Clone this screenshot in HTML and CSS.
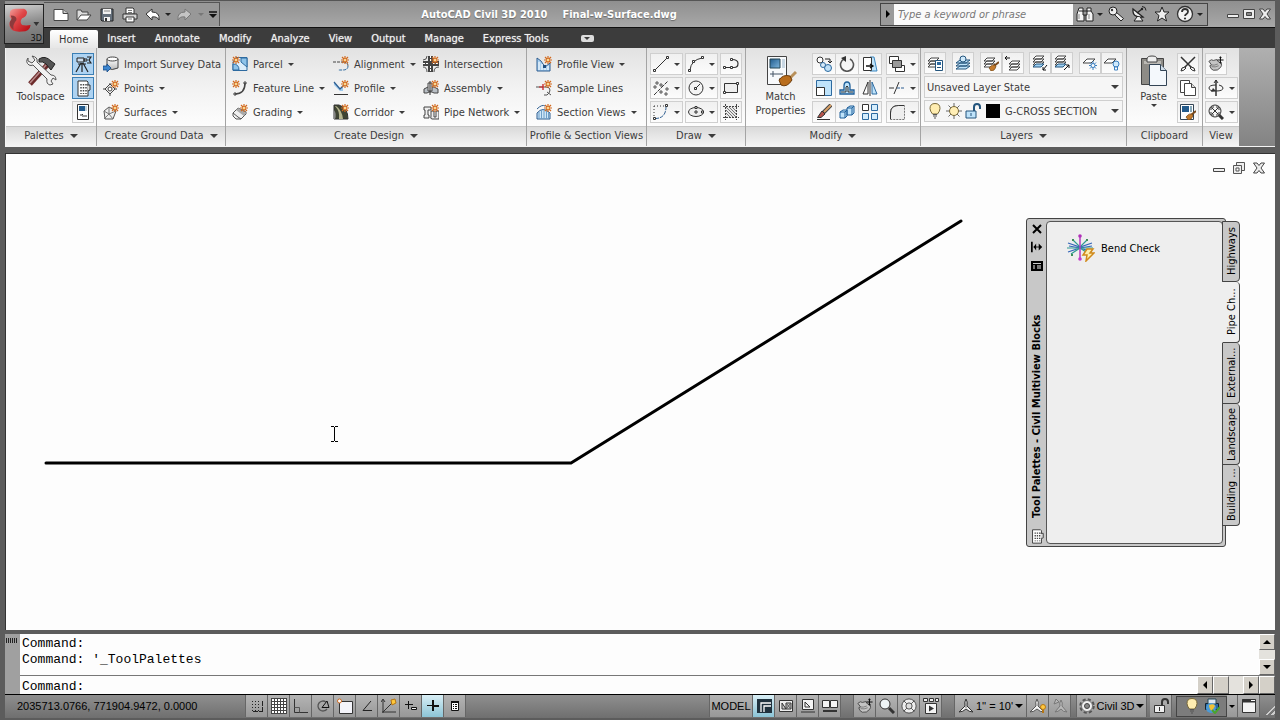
FILE: index.html
```html
<!DOCTYPE html>
<html lang="en">
<head>
    <meta charset="UTF-8">
    <meta name="viewport" content="width=device-width, initial-scale=1.0">
    <title>AutoCAD Civil 3D 2010 - Final-w-Surface.dwg</title>
    <link rel="stylesheet" href="styles.css">
</head>
<body>
    <!-- icon sprite -->
    <svg class="sprite" aria-hidden="true">
        <defs>
            <linearGradient id="red" x1="0" y1="0" x2="1" y2="1"><stop offset="0" stop-color="#f2a09c"/><stop offset=".4" stop-color="#e0494a"/><stop offset="1" stop-color="#b3060f"/></linearGradient>
            <linearGradient id="steel" x1="0" y1="0" x2="0" y2="1"><stop offset="0" stop-color="#fff"/><stop offset="1" stop-color="#b9b9b9"/></linearGradient>
            <linearGradient id="blue" x1="0" y1="0" x2="1" y2="1"><stop offset="0" stop-color="#1f5a8c"/><stop offset="1" stop-color="#7fb6de"/></linearGradient>
            <g id="spark"><path d="M12 0v8M8 4h8M9 1l6 6M15 1l-6 6" stroke="#d2691e" stroke-width="1.2"/><circle cx="12" cy="4" r="1.5" fill="#fff0b0" stroke="#d2691e" stroke-width=".6"/></g>
            <g id="brush"><path d="M16 7l-5 4" stroke="#7a4a1c" stroke-width="2"/><path d="M6 13q4-5 7-2q-1 5-5 5-1-2-2-3z" fill="#c47a2c" stroke="#70420f" stroke-width=".7"/></g>
            <g id="sheets" fill="#fff" stroke="#444"><path d="M1 12l3-3h8l-3 3zM1 9l3-3h8L9 9zM1 6l3-3h8L9 6z"/></g>
            <g id="bluesheets" fill="#bfe3fa" stroke="#24557d"><path d="M1 14l4-3h10l-4 3zM1 11l4-3h10l-4 3zM1 8l4-3h10l-4 3z"/></g>

            <symbol id="i-new" viewBox="0 0 16 16"><path d="M1 2.500h9l5 4v7H1z" fill="#fff" stroke="#444"/><path d="M10 2.500v4h5" fill="#ccc" stroke="#444"/></symbol>
            <symbol id="i-open" viewBox="0 0 16 16"><path d="M1 13V3h4l1 2h6v3" fill="#ddd" stroke="#444"/><path d="M1 13l4-5h10l-4 5z" fill="#fff" stroke="#444"/></symbol>
            <symbol id="i-save" viewBox="0 0 16 16"><path d="M2 2h12v12H3l-1-1z" fill="#65707c" stroke="#222"/><path d="M4 2h8v5H4zM5 10h6v4H5z" fill="#f2f2f2"/><path d="M5 4h6" stroke="#888"/><path d="M6 11h2v3H6z" fill="#333"/></symbol>
            <symbol id="i-print" viewBox="0 0 16 16"><path d="M4 1h7l1 1v5H4z" fill="#fff" stroke="#333"/><path d="M1 7h14v5H1z" fill="#d5d5d5" stroke="#333"/><path d="M4 10h8v5H4z" fill="#fff" stroke="#333"/><path d="M6 12h4M6 3.500h4M6 5.500h4" stroke="#777"/></symbol>
            <symbol id="i-undo" viewBox="0 0 16 16"><path d="M1 7l6-5v3q8 0 7 8-2-4-7-3v3z" fill="#fff" stroke="#333"/></symbol>
            <symbol id="i-redo" viewBox="0 0 16 16"><path d="M15 7L9 2v3q-8 0-7 8 2-4 7-3v3z" fill="#c4c4c4" stroke="#777"/></symbol>
            <symbol id="i-menu" viewBox="0 0 8 8"><path d="M0 1h8" stroke="#111" stroke-width="1.500"/><path d="M0 3h8L4 7z" fill="#111"/></symbol>

            <symbol id="i-find" viewBox="0 0 18 16"><path d="M3 2h4v3l1 2v8H1V8l1-3zM11 2h4v3l2 3v7h-7V7l1-2z" fill="#f4f4f4" stroke="#222"/><path d="M7 5h4v4H7z" fill="#999" stroke="#222"/><path d="M3 5h4M11 5h4" stroke="#222"/><path d="M3 8v5M13 8v5" stroke="#888"/></symbol>
            <symbol id="i-key" viewBox="0 0 16 16"><path d="M6 8l7 7 2.500-2.500L8 6" fill="#eee" stroke="#222"/><circle cx="5" cy="5" r="4" fill="#eee" stroke="#222"/><circle cx="4" cy="4" r="1.200" fill="#333"/></symbol>
            <symbol id="i-dish" viewBox="0 0 16 16"><path d="M2 3q-1 9 10 8z" fill="#eee" stroke="#222" stroke-width="1.300"/><path d="M6 7l5-4" stroke="#222" stroke-width="1.300"/><circle cx="11" cy="3" r="1.200" fill="#222"/><path d="M11 .5q4 0 4 4" fill="none" stroke="#222"/><path d="M6 11l-3 4h9l-3-4" fill="#eee" stroke="#222"/></symbol>
            <symbol id="i-star" viewBox="0 0 16 16"><path d="M8 1l2 5h5l-4 3.500 1.500 5.500L8 12l-4.500 3L5 9.500 1 6h5z" fill="#eee" stroke="#222"/></symbol>
            <symbol id="i-help" viewBox="0 0 18 18"><circle cx="9" cy="9" r="7.500" fill="#f4f4f4" stroke="#333" stroke-width="1.300"/><path d="M6 7q0-3 3-3t3 2.500q0 1.500-1.500 2.500T9 11" fill="none" stroke="#333" stroke-width="1.800"/><circle cx="9" cy="13.500" r="1.100" fill="#333"/></symbol>
            <symbol id="i-min" viewBox="0 0 12 12"><path d="M.5 6.500h11v3H.5z" fill="#eee" stroke="#444"/></symbol>
            <symbol id="i-max" viewBox="0 0 12 12"><path d="M.5 1.500h11v9H.5z" fill="#eee" stroke="#444"/><path d="M3.500 4.500h5v3h-5z" fill="#888" stroke="#444"/></symbol>
            <symbol id="i-restore" viewBox="0 0 12 12"><path d="M3.500.5h8v8h-8z" fill="#eee" stroke="#555"/><path d="M.5 3.500h8v8h-8z" fill="#eee" stroke="#555"/><path d="M3 6h3v3H3z" fill="#fff" stroke="#555"/></symbol>
            <symbol id="i-close" viewBox="0 0 12 12"><path d="M.5 1h3.500l2 2.500L8 1h3.500L8 6l3.500 5H8L6 8.500 4 11H.5L4 6z" fill="#eee" stroke="#444"/></symbol>

            <symbol id="i-toolspace" viewBox="0 0 32 32"><path d="M5 29L23 9" stroke="#6d2b2b" stroke-width="5"/><path d="M5 28L22 9" stroke="#b98b8b" stroke-width="1.500"/><path d="M14 4q6-4 12 2l4 3-4 6-5-6q-3-3-7-2z" fill="#555" stroke="#222"/><path d="M3 3q-3 4 1 7 2 1 4 0l14 14q-1 5 3 6l3-1-2-3 2-3 3 2q0-5-5-5L12 7q1-5-5-6l3 4-3 3-4-2z" fill="#f2f2f2" stroke="#555"/></symbol>
            <symbol id="i-survey" viewBox="0 0 18 18"><path d="M3 3h7v4H3zM10 4h3v2h-3z" fill="#cde" stroke="#222"/><path d="M13 2h4l-2 3 2 3h-4M8 8v9M7 8l-5 9M9 8l5 9M4 9h8" fill="none" stroke="#222" stroke-width="1.200"/></symbol>
            <symbol id="i-calc" viewBox="0 0 18 18"><path d="M4 2h9l1 1v14H4z" fill="#fff" stroke="#333"/><path d="M13 6h3v5l-2 1" fill="#ddd" stroke="#333"/><path d="M7 5v10M9.500 5v10M12 5v10" stroke="#444" stroke-width="1.500" stroke-dasharray="1.500 1.500"/></symbol>
            <symbol id="i-props" viewBox="0 0 18 18"><path d="M3.500 1.500h11v15h-11z" fill="#fff" stroke="#333"/><path d="M5 3h6v5H5z" fill="#245b8c"/><path d="M12 3v5" stroke="#8ab"/><path d="M6 12h2l1-1M8 13h5" fill="none" stroke="#333"/></symbol>

            <symbol id="i-import" viewBox="0 0 16 16"><path d="M4 3v9q5 3 11 0V3" fill="url(#steel)" stroke="#444"/><ellipse cx="9.500" cy="3" rx="5.500" ry="2" fill="#fff" stroke="#444"/><path d="M0 10h4V8l4 4-4 4v-2H0z" fill="#3d86cf" stroke="#154a86" stroke-width=".8"/></symbol>
            <symbol id="i-points" viewBox="0 0 16 16"><path d="M7 3v3M7 12v4M0 9h4M10 9h4" stroke="#444"/><path d="M7 4l2 2 3 3-5 5-5-5z" fill="#eee" stroke="#444"/><circle cx="7" cy="9" r="2" fill="#fff" stroke="#444"/><use href="#spark"/></symbol>
            <symbol id="i-surface" viewBox="0 0 16 16"><path d="M1 7l5-4 7 4-3 8H2z" fill="#eee" stroke="#555"/><path d="M6 3v7l-5 5M6 10l7-3M6 10l4 5M6 10L1 7" fill="none" stroke="#777"/><use href="#spark"/></symbol>
            <symbol id="i-parcel" viewBox="0 0 16 16"><path d="M4 1.500h11v13H1V6z" fill="#dcedfa" stroke="#2d6aa0"/><path d="M9 2v4l6 5V2zM1 8q6 0 6 6H1z" fill="#8fc4ea" stroke="#2d6aa0"/><use href="#spark" x="-8"/></symbol>
            <symbol id="i-feature" viewBox="0 0 16 16"><path d="M3 14q10 0 10-11" fill="none" stroke="#444" stroke-width="1.500"/><path d="M1 14h4M3 12v4M11 3h4M13 1v4" stroke="#444"/><use href="#spark" x="-8"/></symbol>
            <symbol id="i-grading" viewBox="0 0 16 16"><path d="M1 9l5-5 8 4v2l-5 5H4l-3-3z" fill="#f0f0f0" stroke="#555"/><path d="M4 6l8 6 2-3-8-5z" fill="#aaa"/><path d="M1 9l5 4 3 2" fill="none" stroke="#555"/><use href="#spark"/></symbol>
            <symbol id="i-align" viewBox="0 0 16 16"><path d="M0 6h3M4 6h6M10 6q5 0 5 4" fill="none" stroke="#444" stroke-dasharray="3 1"/><path d="M15 10q0 4-5 4H5" fill="none" stroke="#2d6aa0" stroke-dasharray="3 1"/><use href="#spark"/></symbol>
            <symbol id="i-profile" viewBox="0 0 16 16"><path d="M1 2l6 7 3-3v5H7L1 5z" fill="#9cc8ec"/><path d="M1 2l6 7 4-4" fill="none" stroke="#2d5d90" stroke-width="1.200"/><path d="M1 14.500h14" stroke="#333"/><use href="#spark"/></symbol>
            <symbol id="i-corridor" viewBox="0 0 16 16"><path d="M1 1h5q9 3 9 14H1z" fill="#3f4433" stroke="#333"/><path d="M2 2q5 5 4 13h4Q9 6 3 2z" fill="#b6b58e"/><path d="M1 6q3 4 1 9H1z" fill="#888"/><use href="#spark"/></symbol>
            <symbol id="i-intersect" viewBox="0 0 16 16"><path d="M5 0h5v5h6v5h-6v6H5v-6H0V5h5z" fill="#444"/><path d="M7.500 0v5M0 7.500h5M10 7.500h6M7.500 10v6" stroke="#fff" stroke-dasharray="2 1"/><path d="M0 4q4 0 4-4M0 11q4 0 4 5M11 16q0-5 5-5" fill="none" stroke="#555"/><use href="#spark"/></symbol>
            <symbol id="i-assembly" viewBox="0 0 16 16"><path d="M1 13V9l4-2h6l4 2v4h-4l-2-1H6l-2 1z" fill="#b9bfc5" stroke="#444"/><path d="M5 3h4v8H5z" fill="#e8e8e8" stroke="#444"/><path d="M7 1v14" stroke="#333"/><use href="#spark"/></symbol>
            <symbol id="i-pipe" viewBox="0 0 16 16"><path d="M1 3h7v3H5v5h1v3H1v-3h1V6H1zM8 7h3v6h2V7h3v8H9q-2 0-1-3z" fill="#eee" stroke="#444"/><use href="#spark"/></symbol>
            <symbol id="i-pview" viewBox="0 0 16 16"><path d="M1 2v13h13V7l-5 4-4-6z" fill="#a9d0f0" stroke="#2d5d90"/><path d="M3 6v8M6 8v6M9 12v2M12 10v4" stroke="#fff"/><path d="M7 9h3v3H7z" fill="#1f4f80"/><use href="#spark"/></symbol>
            <symbol id="i-sample" viewBox="0 0 16 16"><path d="M0 7h10q4 0 4 3t-3 5H8" fill="none" stroke="#555"/><path d="M7 4v6" stroke="#c22" stroke-width="1.300"/><path d="M3 7h4" stroke="#c22"/><path d="M11 12l4 3" stroke="#555"/><use href="#spark"/></symbol>
            <symbol id="i-section" viewBox="0 0 16 16"><path d="M1 15V9q6-7 13 0v6z" fill="#cfe6f8" stroke="#2d5d90"/><path d="M3 8v7M5.500 6v9M8 6v9M10.500 6v9M12.500 8v7" stroke="#6f9fc8"/><path d="M1 5q5-5 8-3" fill="none" stroke="#2d5d90"/><use href="#spark"/></symbol>

            <symbol id="i-line" viewBox="0 0 16 16"><path d="M2 14L14 2" stroke="#333"/><path d="M.5 13.500h2v2h-2zM13.500.5h2v2h-2z" fill="#fff" stroke="#333"/></symbol>
            <symbol id="i-arc" viewBox="0 0 16 16"><path d="M2 14Q3 4 14 2" fill="none" stroke="#333"/><path d="M.5 13.500h2v2h-2zM13.500.5h2v2h-2zM4.500 4.500h2v2h-2z" fill="#fff" stroke="#333"/></symbol>
            <symbol id="i-pline" viewBox="0 0 16 16"><path d="M2 11.500h9q4 0 4-4t-6-4" fill="none" stroke="#333" stroke-width="1.200"/><path d="M.5 10.500h2v2h-2zM7.500 10.500h2v2h-2zM7.500 2.500h2v2h-2z" fill="#fff" stroke="#333"/></symbol>
            <symbol id="i-divide" viewBox="0 0 16 16"><path d="M1 15L15 1" stroke="#333" stroke-dasharray="4 1"/><path d="M3 2h2v2H3zM1 6h2v2H1zM7 4h2v2H7zM7 11h2v2H7zM13 8h2v2h-2zM12 13h2v2h-2z" fill="#fff" stroke="#333" stroke-width=".8"/></symbol>
            <symbol id="i-circle" viewBox="0 0 16 16"><circle cx="8" cy="8" r="7" fill="#f4f4f4" stroke="#333"/><path d="M8 8l4-4" stroke="#333"/><path d="M6.500 7.500h2v2h-2z" fill="#fff" stroke="#333"/></symbol>
            <symbol id="i-rect" viewBox="0 0 16 16"><path d="M1.500 3.500h13v9h-13z" fill="#eee" stroke="#333"/><path d="M.5 11.500h2v2h-2zM13.500 2.500h2v2h-2z" fill="#fff" stroke="#333"/></symbol>
            <symbol id="i-curve" viewBox="0 0 16 16"><path d="M2 14.500q11 0 11-12" fill="none" stroke="#2d5d90" stroke-dasharray="4 1"/><path d="M1 2v12M1 2h12" stroke="#333" stroke-dasharray="1 2"/><path d="M.5 13.500h2v2h-2zM12.500.5h2v2h-2z" fill="#fff" stroke="#333"/></symbol>
            <symbol id="i-ellipse" viewBox="0 0 16 16"><ellipse cx="8" cy="8" rx="7.500" ry="4.500" fill="#eee" stroke="#333"/><path d="M7 7h2v2H7zM7 2.500h2v2H7zM13.500 7h2v2h-2z" fill="#fff" stroke="#333"/></symbol>
            <symbol id="i-hatch" viewBox="0 0 16 16"><path d="M2.500 2.500h11v11h-11z" fill="#e8e8e8"/><path d="M3 3l10 10M6 3l7 7M3 6l7 7M9 3l4 4M3 9l4 4" stroke="#777"/><path d="M2.500 0v16M13.500 0v16M0 2.500h16M0 13.500h16" stroke="#444" stroke-dasharray="2 1"/></symbol>

            <symbol id="i-match" viewBox="0 0 32 32"><path d="M2.500 1.500h19v28h-19z" fill="#f8fafc" stroke="#444"/><path d="M5 4h10v9H5z" fill="url(#blue)" stroke="#245"/><path d="M17 4h3v9h-3z" fill="#c9d8e4"/><path d="M5 19h13M8 16v6M14 24h4" stroke="#456"/><path d="M31 17l-7 7" stroke="#b8905a" stroke-width="3"/><path d="M14 25q4-6 11-4l2 4q-5 8-11 5z" fill="#b96d1c" stroke="#6c3b0a"/></symbol>
            <symbol id="i-copyobj" viewBox="0 0 16 16"><circle cx="4" cy="4" r="3" fill="#fff" stroke="#333"/><circle cx="12" cy="12" r="3.500" fill="#bfe0f7" stroke="#2d6aa0"/><path d="M9 3h5v4M12 5l2 2 2-2" fill="none" stroke="#222"/><circle cx="7" cy="9" r="2.500" fill="#d9ecfa" stroke="#2d6aa0"/></symbol>
            <symbol id="i-rotate" viewBox="0 0 16 16"><path d="M5 3a6.500 6.500 0 1 0 6 0" fill="none" stroke="#555" stroke-width="1.600"/><path d="M7 0v6L2 2z" fill="#333"/></symbol>
            <symbol id="i-stretch" viewBox="0 0 16 16"><path d="M8 1h4l3 14H8z" fill="#bfe3fa" stroke="#3b86bf"/><path d="M1.500 1.500h8v13h-8z" fill="#fff" stroke="#333"/><path d="M4 10h6M8 8l3 2-3 2" stroke="#111" fill="none" stroke-width="1.300"/></symbol>
            <symbol id="i-scale" viewBox="0 0 16 16"><path d="M.5.5h15v15H.5z" fill="#bfe3fa" stroke="#2d6aa0"/><path d="M.5 7.500h8v8h-8z" fill="#fff" stroke="#333"/></symbol>
            <symbol id="i-offset" viewBox="0 0 16 16"><path d="M1 14v-4h4V6q0-4 3-4t3 4v4h4v4z" fill="#bfe3fa" stroke="#1f5f99" stroke-width="1.300"/><path d="M2 12h5V7q1-2 2 0v5h5" fill="none" stroke="#333"/></symbol>
            <symbol id="i-mirror" viewBox="0 0 16 16"><path d="M6 2v12H1z" fill="#fff" stroke="#333"/><path d="M10 2v12h5z" fill="#bfe3fa" stroke="#2d6aa0"/><path d="M8 0v16" stroke="#333"/></symbol>
            <symbol id="i-erase" viewBox="0 0 16 16"><path d="M15 1L7 9" stroke="#444" stroke-width="4"/><path d="M15 1L8 8" stroke="#d9a066" stroke-width="2"/><path d="M6 7l3 3-4 3.500H1.500z" fill="#b5534a" stroke="#333"/><path d="M1 15.500h13" stroke="#333"/></symbol>
            <symbol id="i-explode" viewBox="0 0 16 16"><path d="M1 8l3-2h4v6l-2 2H1zM8 4l3-2h4v7l-2 2H8z" fill="#bfe3fa" stroke="#1f5f99"/><path d="M1 8h5v6M6 8l2-2M8 4h5v7M13 4l2-2" fill="none" stroke="#1f5f99"/></symbol>
            <symbol id="i-array" viewBox="0 0 16 16"><path d="M.5.5h6v6h-6z" fill="#fff" stroke="#333"/><path d="M9.500.5h6v6h-6zM.5 9.500h6v6h-6zM9.500 9.500h6v6h-6z" fill="#d5edfc" stroke="#2d6aa0"/></symbol>
            <symbol id="i-order" viewBox="0 0 16 16"><path d="M.5.5h9v7h-9zM6.500 9.500h9v6h-9z" fill="#fff" stroke="#333"/><path d="M3.500 4.500h9v7h-9z" fill="#999" stroke="#333"/></symbol>
            <symbol id="i-trim" viewBox="0 0 16 16"><path d="M0 8h5M10 2L5 14" stroke="#333"/><path d="M8 8h8" stroke="#2d5d90" stroke-dasharray="3 1"/></symbol>
            <symbol id="i-fillet" viewBox="0 0 16 16"><path d="M1.500 15.500V9q0-7.500 8-7.500h6v14z" fill="#eee" stroke="#777" stroke-dasharray="2 1"/><path d="M1.500 15V9q0-7.500 8-7.500H15" fill="none" stroke="#333"/></symbol>

            <symbol id="i-lprops" viewBox="0 0 16 16"><use href="#sheets"/><path d="M8.500 5.500h7v10h-7z" fill="#fff" stroke="#24557d"/><path d="M10 7h4v3h-4z" fill="#2d6aa0"/><path d="M10 12.500h4" stroke="#24557d"/></symbol>
            <symbol id="i-lcurrent" viewBox="0 0 16 16"><use href="#bluesheets"/><circle cx="8" cy="4" r="3" fill="#cfe9fb" stroke="#24557d"/></symbol>
            <symbol id="i-lmatch" viewBox="0 0 16 16"><use href="#sheets"/><use href="#brush"/></symbol>
            <symbol id="i-lprev" viewBox="0 0 16 16"><use href="#sheets" x="3" y="3"/><path d="M0 3h5M2 1L0 3l2 2" stroke="#111" fill="none"/></symbol>
            <symbol id="i-liso" viewBox="0 0 16 16"><use href="#sheets" y="-2"/><path d="M1 12l3-3h8l-3 3z" fill="#9fd2f5" stroke="#24557d"/><path d="M15 10l-4 5M11 12v3h3" fill="none" stroke="#111"/></symbol>
            <symbol id="i-luniso" viewBox="0 0 16 16"><use href="#sheets" y="-2"/><path d="M1 12l3-3h8l-3 3z" fill="#9fd2f5" stroke="#24557d"/><path d="M10 15l5-5M12 10h3v3" fill="none" stroke="#111"/></symbol>
            <symbol id="i-lfreeze" viewBox="0 0 16 16"><path d="M1 8l4-4h8L9 8z" fill="#fff" stroke="#444"/><path d="M11 6v9M7 10.500h8M8 7.500l6 6M14 7.500l-6 6" stroke="#3b7fc0"/><circle cx="11" cy="10.500" r="2" fill="#fff" stroke="#3b7fc0"/></symbol>
            <symbol id="i-loff" viewBox="0 0 16 16"><path d="M0 8l4-4h8L8 8z" fill="#fff" stroke="#444"/><circle cx="12" cy="9" r="3" fill="#cfe9fb" stroke="#3b7fc0"/><path d="M10.500 12h3v3h-3z" fill="#fff" stroke="#3b7fc0"/></symbol>
            <symbol id="i-bulb" viewBox="0 0 16 16"><path d="M5.500 11Q3 8 3 5.500q0-5 5-5t5 5Q13 8 10.500 11z" fill="#ffedb0" stroke="#7a6a3a"/><path d="M6 11.500h4M6 13h4M7 15h2" stroke="#555"/></symbol>
            <symbol id="i-sun" viewBox="0 0 16 16"><path d="M8 0v16M0 8h16M2.500 2.500l11 11M13.500 2.500l-11 11" stroke="#666"/><circle cx="8" cy="8" r="4.500" fill="#ffeeb5" stroke="#7a6a3a"/></symbol>
            <symbol id="i-unlock" viewBox="0 0 16 16"><path d="M9 8V4q0-3 3-3t3 3v2" fill="none" stroke="#24557d" stroke-width="2"/><path d="M1 8h10v7H1z" fill="#bfe3fa" stroke="#24557d"/><path d="M6 10v3" stroke="#24557d"/></symbol>

            <symbol id="i-paste" viewBox="0 0 28 32"><path d="M1.500 3.500h22v26h-22z" fill="#8d8b86" stroke="#444"/><path d="M4 6h17v3H4z" fill="#bbb9b4"/><path d="M7 4q0-3 5-3t5 3v3H7z" fill="#eee" stroke="#444"/><path d="M9.500 9.500h11l6 6v15h-17z" fill="#f4f8fc" stroke="#345"/><path d="M20.500 9.500v6h6" fill="#cfdce8" stroke="#345"/></symbol>
            <symbol id="i-cut" viewBox="0 0 16 16"><path d="M1 1l11 11M15 1L4 12" stroke="#333" stroke-width="1.500"/><path d="M1 15q0-4 4-4l1 1q-2 3-5 3zM15 15q0-4-4-4l-1 1q2 3 5 3z" fill="#eee" stroke="#333"/></symbol>
            <symbol id="i-copy" viewBox="0 0 16 16"><path d="M.5.5h9v12h-9z" fill="#fff" stroke="#444"/><path d="M4.500 3.500h7l4 4v8h-11z" fill="#fff" stroke="#444"/><path d="M11.500 3.500v4h4" fill="#ddd" stroke="#444"/></symbol>
            <symbol id="i-mprop" viewBox="0 0 16 16"><path d="M.5.5h13v15H.5z" fill="#fff" stroke="#345"/><path d="M2 2h7v6H2z" fill="#245b8c"/><path d="M11 2v6" stroke="#8ab" stroke-width="2"/><use href="#brush"/></symbol>
            <symbol id="i-pan" viewBox="0 0 18 16"><path d="M1 5q3-3 5-1l4-1 1 2 4 2q1 3-1 5-3 4-8 3-3-1-4-5l2-1z" fill="#c4c4c4" stroke="#444"/><path d="M3 9q4 1 8-1M4 11q4 1 8-1" fill="none" stroke="#777"/><path d="M14 0v7M10.500 3.500h7M13 1l1-1 1 1M13 6l1 1 1-1" fill="none" stroke="#111" stroke-width="1.200"/></symbol>
            <symbol id="i-orbit" viewBox="0 0 16 16"><path d="M8 0v16" stroke="#333" stroke-width="1.500"/><path d="M6 3l2-3 2 3" fill="none" stroke="#333"/><path d="M11 5q4 1 4 3 0 3-7 3t-7-3q0-3 7-3" fill="none" stroke="#333"/><path d="M5 8l-2 4 5-1z" fill="#333"/></symbol>
            <symbol id="i-zoomext" viewBox="0 0 16 16"><path d="M11 11l4 4" stroke="#333" stroke-width="3"/><circle cx="7" cy="7" r="6" fill="#f4f4f4" stroke="#333"/><path d="M4 4l6 6M10 4l-6 6" stroke="#333"/><path d="M3 6V3h3M8 3h3v3M3 8v3h3M11 8v3H8" fill="none" stroke="#333"/></symbol>

            <symbol id="i-bend" viewBox="0 0 28 28"><path d="M1 9l12 4 12-4M1 18l12-4 12 4M2 12l11 2 12-2" fill="none" stroke="#3566b8" stroke-width="1.200"/><path d="M0 14h26M4 20l9-6 9 6M6 6l7 7 7-7" fill="none" stroke="#2e9a91" stroke-width="1.200"/><path d="M5 5h2v2H5zM19 5h2v2h-2zM4 20h2v2H4z" fill="#3c8f5a"/><path d="M13 2v23" stroke="#b43bc0" stroke-width="1.500"/><circle cx="13" cy="2" r="1.800" fill="#b030b8"/><circle cx="13" cy="25" r="1.800" fill="#c53acb"/><path d="M20 15h6l-3 4h4l-8 8 1-6h-4z" fill="#fdf0b0" stroke="#d18a1c" stroke-width="1.500"/></symbol>
            <symbol id="i-autohide" viewBox="0 0 14 12"><path d="M1 0v12" stroke="#000" stroke-width="2"/><path d="M6 2L3 6l3 4zM9 2l4 4-4 4z"/><path d="M3 6h9" stroke="#000"/></symbol>
            <symbol id="i-palmenu" viewBox="0 0 12 12"><path d="M0 1h12v10H0z"/><path d="M2 3.500h8" stroke="#ccc"/><path d="M6 6h4M6 8h4M2 6h2M2 8h2" stroke="#eee"/></symbol>
            <symbol id="i-x" viewBox="0 0 10 10"><path d="M1 1l8 8M9 1L1 9" stroke="#000" stroke-width="2"/></symbol>

            <symbol id="i-snap" viewBox="0 0 16 16"><path d="M3.500 3v10M6.500 3v10M9.500 3v10" stroke="#222" stroke-dasharray="1 2"/><path d="M13.500 3v11M4 13.500h10" stroke="#222" stroke-dasharray="5 1"/></symbol>
            <symbol id="i-grid" viewBox="0 0 16 16"><path d="M.5.5h15v15H.5z" fill="#fff"/><path d="M.5 0v16M3.500 0v16M6.500 0v16M9.500 0v16M12.500 0v16M15.500 0v16M0 .5h16M0 3.500h16M0 6.500h16M0 9.500h16M0 12.500h16M0 15.500h16" stroke="#444"/></symbol>
            <symbol id="i-ortho" viewBox="0 0 16 16"><path d="M1.500 1v13.500H15" fill="none" stroke="#333"/><path d="M1.500 9.500h5v5" fill="none" stroke="#555"/></symbol>
            <symbol id="i-polar" viewBox="0 0 16 16"><path d="M11 4a5 5 0 1 0 1 7" fill="none" stroke="#555" stroke-width="1.300"/><path d="M7 9.500h7L12 3 7 9.500" fill="none" stroke="#111"/></symbol>
            <symbol id="i-osnap" viewBox="0 0 16 16"><path d="M2.500 3.500h13v12h-13z" fill="#f4f4fa" stroke="#333"/><circle cx="2.500" cy="3" r="2" fill="#fff" stroke="#cf6a20"/></symbol>
            <symbol id="i-otrack" viewBox="0 0 16 16"><path d="M12 3L4 12.500h9" fill="none" stroke="#222"/></symbol>
            <symbol id="i-ducs" viewBox="0 0 16 16"><path d="M2 15V2M0 4l2-3 2 3M1 14h14M2 14l9-9" fill="none" stroke="#333"/><path d="M10 2l4-1 1 4-4 2z" fill="#ffc93c" stroke="#b57614"/></symbol>
            <symbol id="i-dyn" viewBox="0 0 16 16"><path d="M2 6.500h8M5.500 3v8" stroke="#111"/><path d="M8.500 9.500h5v2h-5z" fill="#eee" stroke="#111"/></symbol>
            <symbol id="i-lwt" viewBox="0 0 16 16"><path d="M2 7.500h6" stroke="#111"/><path d="M8 8h6M8 2v11" stroke="#111" stroke-width="2"/></symbol>
            <symbol id="i-qp" viewBox="0 0 16 16"><path d="M4.500 3.500h7v9h-7z" fill="#fff" stroke="#111"/><path d="M4 4h8" stroke="#111" stroke-width="2"/><path d="M6 6.500h4M6 8.500h4M6 10.500h4" stroke="#111" stroke-dasharray="1 1 3"/></symbol>
            <symbol id="i-model" viewBox="0 0 16 16"><path d="M1 1h15v14H1z" fill="#20323e"/><path d="M5 14V5h10M8 14V8h7" fill="none" stroke="#fff" stroke-width="1.300"/></symbol>
            <symbol id="i-layout" viewBox="0 0 16 16"><path d="M1.500 2.500h13v11h-13z" fill="#eee" stroke="#333"/><path d="M4 5v6h4zM8 5h5v6H8z" fill="#ccc" stroke="#333"/><path d="M8 5l5 6M13 5l-5 6" stroke="#555"/></symbol>
            <symbol id="i-qvl" viewBox="0 0 16 16"><path d="M2.500 1.500h11v10h-11z" fill="#f4f4f4" stroke="#333"/><path d="M5 4v5h5z" fill="none" stroke="#333"/><path d="M1 14h14" stroke="#333"/></symbol>
            <symbol id="i-qvd" viewBox="0 0 16 16"><path d="M.5 2.500h7v7h-7zM8.500 2.500h7v7h-7z" fill="#f4f4f4" stroke="#333"/><path d="M1 13h14" stroke="#333" stroke-width="2"/></symbol>
            <symbol id="i-zoom" viewBox="0 0 16 16"><path d="M10 10l5 5" stroke="#333" stroke-width="3"/><circle cx="6" cy="6" r="5" fill="#eef4f6" stroke="#333"/></symbol>
            <symbol id="i-wheel" viewBox="0 0 18 18"><circle cx="9" cy="9" r="8" fill="#eee" stroke="#444"/><circle cx="9" cy="9" r="3.500" fill="#ddd" stroke="#444"/><path d="M3 3l3.500 3.500M15 3l-3.500 3.500M3 15l3.500-3.500M15 15l-3.500-3.500" stroke="#444"/></symbol>
            <symbol id="i-motion" viewBox="0 0 16 16"><path d="M.5.500h4v3h-4zM6.500.500h4v3h-4zM12.500.500h3v3h-3z" fill="#eee" stroke="#333"/><path d="M2.500 5.500h11v10h-11z" fill="#f4f4f4" stroke="#333"/><path d="M6 7.500l5 3-5 3z" fill="#333"/></symbol>
            <symbol id="i-anno" viewBox="0 0 16 16"><path d="M8 1q2 3 1 7l6 6q-4 0-7-3-3 3-7 3l6-6Q6 4 8 1z" fill="#f4f4f4" stroke="#333"/><path d="M8 3v7" stroke="#777"/></symbol>
            <symbol id="i-annovis" viewBox="0 0 16 16"><path d="M7 1q2 3 1 7l6 6q-4 0-7-3-3 3-7 3l6-6Q5 4 7 1z" fill="#f4f4f4" stroke="#555"/><circle cx="13" cy="9" r="2.500" fill="#ffc840" stroke="#b57614"/><path d="M13 12v3" stroke="#b57614" stroke-width="2"/></symbol>
            <symbol id="i-annoauto" viewBox="0 0 16 16"><path d="M9 2q2 3 1 6l5 6q-4 0-6-3-3 3-6 3l5-6q-1-3 1-6zM4 1L2 6l5-2z" fill="#b9b9b9" stroke="#777"/></symbol>
            <symbol id="i-gear" viewBox="0 0 16 16"><circle cx="8" cy="8" r="6.500" fill="none" stroke="#555" stroke-width="2.500" stroke-dasharray="3 2.100"/><circle cx="8" cy="8" r="5.500" fill="#f0f0f0" stroke="#777"/><circle cx="8" cy="8" r="2.500" fill="#888" stroke="#444"/></symbol>
            <symbol id="i-lock" viewBox="0 0 16 16"><path d="M9 7V4q0-3 3-3t3 3v2" fill="none" stroke="#333" stroke-width="2"/><path d="M1.500 7.500h10v7h-10z" fill="#eee" stroke="#333"/><path d="M6.500 9v4" stroke="#333"/></symbol>
            <symbol id="i-globe" viewBox="0 0 16 16"><path d="M1.500 5.500h13v6h-13z" fill="#2d6aa0" stroke="#123"/><path d="M4 1h8v5H4z" fill="#dfe9f2" stroke="#245"/><circle cx="7" cy="10" r="5" fill="#4b9ad6"/><path d="M5 7q5-2 6 1l-3 5q-3-2-3-6z" fill="#f1c232"/><path d="M8 12l3 3 5-6" fill="none" stroke="#4aa52e" stroke-width="2"/></symbol>
            <symbol id="i-clean" viewBox="0 0 16 16"><path d="M1.500 1.500h13v13h-13z" fill="#f4f4f4" stroke="#333"/><path d="M1 3h14" stroke="#333" stroke-width="3"/><path d="M10 2.500h4" stroke="#fff"/></symbol>
        </defs>
    </svg>

    <div class="app">
        <header class="titlebar">
            <div class="qat">
                <button aria-label="New"><svg><use href="#i-new"/></svg></button>
                <button aria-label="Open"><svg><use href="#i-open"/></svg></button>
                <button aria-label="Save"><svg><use href="#i-save"/></svg></button>
                <button aria-label="Plot"><svg><use href="#i-print"/></svg></button>
                <button aria-label="Undo"><svg><use href="#i-undo"/></svg></button>
                <button class="drop" aria-label="Undo list"><i class="tri"></i></button>
                <button aria-label="Redo"><svg><use href="#i-redo"/></svg></button>
                <button class="drop dim" aria-label="Redo list"><i class="tri"></i></button>
                <button class="drop" aria-label="Customize"><svg class="s8"><use href="#i-menu"/></svg></button>
            </div>
            <h1 class="title"><span>AutoCAD Civil 3D 2010</span><span>Final-w-Surface.dwg</span></h1>
            <div class="infocenter">
                <button class="expand" aria-label="Collapse search"><i class="tri right"></i></button>
                <input type="text" placeholder="Type a keyword or phrase" aria-label="Search">
                <button aria-label="Search"><svg class="s18"><use href="#i-find"/></svg></button>
                <button class="drop" aria-label="Search options"><i class="tri"></i></button>
                <button aria-label="Subscription"><svg><use href="#i-key"/></svg></button>
                <button aria-label="Communication"><svg><use href="#i-dish"/></svg></button>
                <button aria-label="Favorites"><svg><use href="#i-star"/></svg></button>
                <button aria-label="Help"><svg class="s18"><use href="#i-help"/></svg></button>
                <button class="drop" aria-label="Help options"><i class="tri"></i></button>
            </div>
            <div class="winbtns">
                <button aria-label="Minimize"><svg class="s12"><use href="#i-min"/></svg></button>
                <button aria-label="Maximize"><svg class="s12"><use href="#i-max"/></svg></button>
                <button aria-label="Close"><svg class="s12"><use href="#i-close"/></svg></button>
            </div>
        </header>
        <button class="appmenu" aria-label="Application menu">
            <svg viewBox="0 0 40 40"><path d="M5 11Q4 4 11 4l9 0q4 2 3 5-1 4-5 5-3 4 0 7 4 1 9 0-1 7-9 7-11 1-13-5-1-5 2-8-3-3-2-4z" fill="url(#red)"/><path d="M6 11q7 0 6 5-4 4-3 10-5-3-4-8 2-3 2-4z" fill="#8d3a3c"/><path d="M30 18h6l-3 4z" fill="#333"/></svg>
            <span>3D</span>
        </button>

        <nav class="tabs">
            <button class="tab active">Home</button>
            <button class="tab">Insert</button>
            <button class="tab">Annotate</button>
            <button class="tab">Modify</button>
            <button class="tab">Analyze</button>
            <button class="tab">View</button>
            <button class="tab">Output</button>
            <button class="tab">Manage</button>
            <button class="tab">Express Tools</button>
            <button class="ribbon-toggle" aria-label="Minimize ribbon"><i class="tri"></i></button>
        </nav>

        <div class="ribbon">
            <section class="panel palettes">
                <div class="panel-body">
                    <button class="big"><svg class="s32"><use href="#i-toolspace"/></svg>Toolspace</button>
                    <div class="tools one">
                        <button class="tool on" aria-label="Survey"><svg class="s18"><use href="#i-survey"/></svg></button>
                        <button class="tool on" aria-label="Tool Palettes"><svg class="s18"><use href="#i-calc"/></svg></button>
                        <button class="tool" aria-label="Properties"><svg class="s18"><use href="#i-props"/></svg></button>
                    </div>
                </div>
                <h2>Palettes <i class="tri wide"></i></h2>
            </section>

            <section class="panel ground">
                <div class="panel-body">
                    <div class="col">
                        <button class="item"><svg><use href="#i-import"/></svg>Import Survey Data</button>
                        <button class="item"><svg><use href="#i-points"/></svg>Points<i class="tri"></i></button>
                        <button class="item"><svg><use href="#i-surface"/></svg>Surfaces<i class="tri"></i></button>
                    </div>
                </div>
                <h2>Create Ground Data <i class="tri wide"></i></h2>
            </section>

            <section class="panel design">
                <div class="panel-body">
                    <div class="col">
                        <button class="item"><svg><use href="#i-parcel"/></svg>Parcel<i class="tri"></i></button>
                        <button class="item"><svg><use href="#i-feature"/></svg>Feature Line<i class="tri"></i></button>
                        <button class="item"><svg><use href="#i-grading"/></svg>Grading<i class="tri"></i></button>
                    </div>
                    <div class="col">
                        <button class="item"><svg><use href="#i-align"/></svg>Alignment<i class="tri"></i></button>
                        <button class="item"><svg><use href="#i-profile"/></svg>Profile<i class="tri"></i></button>
                        <button class="item"><svg><use href="#i-corridor"/></svg>Corridor<i class="tri"></i></button>
                    </div>
                    <div class="col">
                        <button class="item"><svg><use href="#i-intersect"/></svg>Intersection</button>
                        <button class="item"><svg><use href="#i-assembly"/></svg>Assembly<i class="tri"></i></button>
                        <button class="item"><svg><use href="#i-pipe"/></svg>Pipe Network<i class="tri"></i></button>
                    </div>
                </div>
                <h2>Create Design <i class="tri wide"></i></h2>
            </section>

            <section class="panel views">
                <div class="panel-body">
                    <div class="col">
                        <button class="item"><svg><use href="#i-pview"/></svg>Profile View<i class="tri"></i></button>
                        <button class="item"><svg><use href="#i-sample"/></svg>Sample Lines</button>
                        <button class="item"><svg><use href="#i-section"/></svg>Section Views<i class="tri"></i></button>
                    </div>
                </div>
                <h2>Profile &amp; Section Views</h2>
            </section>

            <section class="panel draw">
                <div class="panel-body">
                    <div class="tools one">
                        <button class="tool split" aria-label="Line"><svg><use href="#i-line"/></svg><i class="tri"></i></button>
                        <button class="tool split" aria-label="Divide"><svg><use href="#i-divide"/></svg><i class="tri"></i></button>
                        <button class="tool split" aria-label="Curve"><svg><use href="#i-curve"/></svg><i class="tri"></i></button>
                    </div>
                    <div class="tools one">
                        <button class="tool split" aria-label="Arc"><svg><use href="#i-arc"/></svg><i class="tri"></i></button>
                        <button class="tool split" aria-label="Circle"><svg><use href="#i-circle"/></svg><i class="tri"></i></button>
                        <button class="tool split" aria-label="Ellipse"><svg><use href="#i-ellipse"/></svg><i class="tri"></i></button>
                    </div>
                    <div class="tools one">
                        <button class="tool" aria-label="Polyline"><svg><use href="#i-pline"/></svg></button>
                        <button class="tool" aria-label="Rectangle"><svg><use href="#i-rect"/></svg></button>
                        <button class="tool" aria-label="Hatch"><svg><use href="#i-hatch"/></svg></button>
                    </div>
                </div>
                <h2>Draw <i class="tri wide"></i></h2>
            </section>

            <section class="panel modify">
                <div class="panel-body">
                    <button class="big"><svg class="s32"><use href="#i-match"/></svg>Match<br>Properties</button>
                    <div class="tools three">
                        <button class="tool" aria-label="Copy"><svg><use href="#i-copyobj"/></svg></button>
                        <button class="tool" aria-label="Rotate"><svg><use href="#i-rotate"/></svg></button>
                        <button class="tool" aria-label="Stretch"><svg><use href="#i-stretch"/></svg></button>
                        <button class="tool" aria-label="Scale"><svg><use href="#i-scale"/></svg></button>
                        <button class="tool" aria-label="Offset"><svg><use href="#i-offset"/></svg></button>
                        <button class="tool" aria-label="Mirror"><svg><use href="#i-mirror"/></svg></button>
                        <button class="tool" aria-label="Erase"><svg><use href="#i-erase"/></svg></button>
                        <button class="tool" aria-label="Explode"><svg><use href="#i-explode"/></svg></button>
                        <button class="tool" aria-label="Array"><svg><use href="#i-array"/></svg></button>
                    </div>
                    <div class="tools one">
                        <button class="tool split" aria-label="Draw order"><svg><use href="#i-order"/></svg><i class="tri"></i></button>
                        <button class="tool split" aria-label="Trim"><svg><use href="#i-trim"/></svg><i class="tri"></i></button>
                        <button class="tool split" aria-label="Fillet"><svg><use href="#i-fillet"/></svg><i class="tri"></i></button>
                    </div>
                </div>
                <h2>Modify <i class="tri wide"></i></h2>
            </section>

            <section class="panel layers">
                <div class="panel-body">
                    <div class="layer-tools">
                        <div><button class="tool" aria-label="Layer properties"><svg><use href="#i-lprops"/></svg></button></div>
                        <div><button class="tool" aria-label="Make current"><svg><use href="#i-lcurrent"/></svg></button></div>
                        <div><button class="tool" aria-label="Match layer"><svg><use href="#i-lmatch"/></svg></button><button class="tool" aria-label="Previous layer"><svg><use href="#i-lprev"/></svg></button></div>
                        <div><button class="tool" aria-label="Isolate"><svg><use href="#i-liso"/></svg></button><button class="tool" aria-label="Unisolate"><svg><use href="#i-luniso"/></svg></button></div>
                        <div><button class="tool" aria-label="Freeze"><svg><use href="#i-lfreeze"/></svg></button><button class="tool" aria-label="Layer off"><svg><use href="#i-loff"/></svg></button></div>
                    </div>
                    <div class="combo">
                        <select aria-label="Layer state"><option>Unsaved Layer State</option></select>
                        <i class="tri wide"></i>
                    </div>
                    <div class="combo">
                        <svg><use href="#i-bulb"/></svg><svg><use href="#i-sun"/></svg><svg><use href="#i-unlock"/></svg>
                        <span class="swatch"></span>
                        <select aria-label="Layer"><option>G-CROSS SECTION</option></select>
                        <i class="tri wide"></i>
                    </div>
                </div>
                <h2>Layers <i class="tri wide"></i></h2>
            </section>

            <section class="panel clipboard">
                <div class="panel-body">
                    <button class="big"><svg class="s32"><use href="#i-paste"/></svg>Paste<i class="tri"></i></button>
                    <div class="tools one">
                        <button class="tool" aria-label="Cut"><svg><use href="#i-cut"/></svg></button>
                        <button class="tool" aria-label="Copy clip"><svg><use href="#i-copy"/></svg></button>
                        <button class="tool" aria-label="Match"><svg><use href="#i-mprop"/></svg></button>
                    </div>
                </div>
                <h2>Clipboard</h2>
            </section>

            <section class="panel view">
                <div class="panel-body">
                    <div class="tools one">
                        <button class="tool" aria-label="Pan"><svg><use href="#i-pan"/></svg></button>
                        <button class="tool split" aria-label="Orbit"><svg><use href="#i-orbit"/></svg><i class="tri"></i></button>
                        <button class="tool split" aria-label="Extents"><svg><use href="#i-zoomext"/></svg><i class="tri"></i></button>
                    </div>
                </div>
                <h2>View</h2>
            </section>
        </div>

        <main class="canvas">
            <svg class="drawing" width="1000" height="400">
                <path d="M40 309H565L955 67" fill="none" stroke="#000" stroke-width="3" stroke-linecap="round"/>
                <path d="M325 272.500h3M329 272.500h3M328.500 273v14M325 287.500h3M329 287.500h3" fill="none" stroke="#000"/>
            </svg>
            <div class="docbtns">
                <button aria-label="Minimize drawing"><svg class="s12"><use href="#i-min"/></svg></button>
                <button aria-label="Restore drawing"><svg class="s12"><use href="#i-restore"/></svg></button>
                <button aria-label="Close drawing"><svg class="s12"><use href="#i-close"/></svg></button>
            </div>
            <aside class="palette">
                <div class="palette-frame">
                    <div class="palette-bar">
                        <button aria-label="Close palette"><svg class="s10"><use href="#i-x"/></svg></button>
                        <button aria-label="Auto-hide"><svg class="s12"><use href="#i-autohide"/></svg></button>
                        <button aria-label="Palette menu"><svg class="s12"><use href="#i-palmenu"/></svg></button>
                        <h3>Tool Palettes - Civil Multiview Blocks</h3>
                        <svg><use href="#i-calc"/></svg>
                    </div>
                    <div class="palette-page">
                        <button class="palette-tool"><svg class="s28"><use href="#i-bend"/></svg>Bend Check</button>
                    </div>
                </div>
                <div class="palette-tabs">
                    <button>Highways</button>
                    <button class="active">Pipe Ch...</button>
                    <button>External...</button>
                    <button>Landscape</button>
                    <button>Building ...</button>
                </div>
            </aside>
        </main>

        <div class="command">
            <div class="grip"></div>
            <div class="command-body">
                <div class="history">
                    <div class="log">
                        <p>Command:</p>
                        <p>Command: '_ToolPalettes</p>
                    </div>
                    <div class="vscroll">
                        <button class="sb" aria-label="Scroll up"><i class="tri up wide"></i></button>
                        <button class="sb" aria-label="Scroll down"><i class="tri wide"></i></button>
                    </div>
                </div>
                <div class="prompt">
                    <label for="cmd">Command:</label>
                    <input id="cmd" type="text">
                    <div class="hscroll">
                        <button class="sb" aria-label="Scroll left"><i class="tri left"></i></button>
                        <span class="sb"></span>
                        <button class="sb end" aria-label="Scroll right"><i class="tri right"></i></button>
                    </div>
                    <span class="sb corner"></span>
                </div>
            </div>
        </div>

        <footer class="status">
            <span class="coords">2035713.0766, 771904.9472, 0.0000</span>
            <div class="group">
                <button aria-label="Snap"><svg><use href="#i-snap"/></svg></button>
                <button aria-label="Grid"><svg><use href="#i-grid"/></svg></button>
                <button aria-label="Ortho"><svg><use href="#i-ortho"/></svg></button>
                <button aria-label="Polar"><svg><use href="#i-polar"/></svg></button>
                <button aria-label="Object snap"><svg><use href="#i-osnap"/></svg></button>
                <button aria-label="Tracking"><svg><use href="#i-otrack"/></svg></button>
                <button aria-label="Dynamic UCS"><svg><use href="#i-ducs"/></svg></button>
                <button aria-label="Dynamic input"><svg><use href="#i-dyn"/></svg></button>
                <button class="on" aria-label="Lineweight"><svg><use href="#i-lwt"/></svg></button>
                <button aria-label="Quick properties"><svg><use href="#i-qp"/></svg></button>
            </div>
            <div class="group push">
                <button class="text">MODEL</button>
                <button class="on" aria-label="Model"><svg><use href="#i-model"/></svg></button>
                <button aria-label="Layout"><svg><use href="#i-layout"/></svg></button>
                <button aria-label="Quick view layouts"><svg><use href="#i-qvl"/></svg></button>
                <button aria-label="Quick view drawings"><svg><use href="#i-qvd"/></svg></button>
            </div>
            <div class="group">
                <button aria-label="Pan"><svg><use href="#i-pan"/></svg></button>
                <button aria-label="Zoom"><svg><use href="#i-zoom"/></svg></button>
                <button aria-label="Steering wheel"><svg><use href="#i-wheel"/></svg></button>
                <button aria-label="ShowMotion"><svg><use href="#i-motion"/></svg></button>
            </div>
            <div class="group">
                <button class="text scale"><svg><use href="#i-anno"/></svg>1'' = 10'<i class="tri wide"></i></button>
                <button aria-label="Annotation visibility"><svg><use href="#i-annovis"/></svg></button>
                <button aria-label="Auto scale"><svg><use href="#i-annoauto"/></svg></button>
            </div>
            <div class="group tail">
                <button class="text workspace"><svg><use href="#i-gear"/></svg>Civil 3D<i class="tri wide"></i></button>
                <button aria-label="Lock"><svg><use href="#i-lock"/></svg></button>
                <div class="tray"><svg><use href="#i-bulb"/></svg><svg><use href="#i-globe"/></svg></div>
                <button class="narrow" aria-label="Tray menu"><i class="tri"></i></button>
                <button aria-label="Clean screen"><svg><use href="#i-clean"/></svg></button>
                <span class="sizegrip"></span>
            </div>
        </footer>
    </div>
</body>
</html>
```
FILE: styles.css
```css
* {
    box-sizing: border-box;
}
body {
    margin: 0;
    background: #5c5c5c;
    font-family: "DejaVu Sans Condensed", "Noto Sans", sans-serif;
    font-size: 11px;
    color: #3c3c3c;
}
button, input, select {
    font: inherit;
    color: inherit;
    border: 0;
    padding: 0;
    margin: 0;
    background: none;
}
h1, h2, h3, p {
    margin: 0;
    font-size: 11px;
    font-weight: normal;
}
.sprite {
    position: absolute;
    width: 0;
    height: 0;
}
svg {
    width: 16px;
    height: 16px;
    flex: none;
    display: block;
}
.s8 { width: 8px; height: 8px; }
.s10 { width: 10px; height: 10px; }
.s12 { width: 12px; height: 12px; }
.s18 { width: 18px; height: 18px; }
.s28 { width: 28px; height: 28px; }
.s32 { width: 32px; height: 32px; }

/* little arrows */
.tri {
    display: inline-block;
    flex: none;
    border: solid transparent;
    border-width: 3px 3px 0;
    border-top-color: currentColor;
}
.tri.wide {
    border-width: 4px 4px 0;
}
.tri.up {
    border-width: 0 4px 4px;
    border-bottom-color: currentColor;
}
.tri.right {
    border-width: 4px 0 4px 4px;
    border-color: transparent transparent transparent currentColor;
}
.tri.left {
    border-width: 4px 4px 4px 0;
    border-color: transparent currentColor transparent transparent;
}

.app {
    position: relative;
    display: flex;
    flex-direction: column;
    min-height: 100vh;
    padding: 0 5px 2px;
}

/* title bar */
.titlebar {
    display: flex;
    align-items: center;
    height: 28px;
    padding-left: 39px;
    background: linear-gradient(#8f8f8f, #a8a8a8);
    border-top: 1px solid #555;
    border-bottom: 1px solid #111;
}
.titlebar button {
    display: flex;
    align-items: center;
    justify-content: center;
    width: 23px;
    height: 22px;
    color: #222;
}
.titlebar button.drop {
    width: 8px;
}
.titlebar button.dim {
    color: #777;
    margin: 0 4px 0 2px;
}
.qat {
    display: flex;
    align-items: center;
    height: 24px;
    padding-left: 5px;
    width: 176px;
    border: solid #555;
    border-width: 1px 1px 0 0;
    background: #989898;
}
.title {
    flex: 1;
    display: flex;
    justify-content: center;
    gap: 15px;
    padding-right: 2px;
    color: #fff;
    font-weight: bold;
    white-space: nowrap;
    text-shadow: 0 1px 1px #666;
}
.infocenter {
    display: flex;
    align-items: center;
    width: 328px;
    height: 23px;
    border: 1px solid #444;
    background: #9a9a9a;
}
.infocenter input {
    width: 179px;
    height: 21px;
    padding-left: 4px;
    background: #fafafa;
    font-style: italic;
}
.infocenter input::placeholder {
    color: #777;
    opacity: 1;
}
.titlebar .expand {
    width: 13px;
    color: #000;
}
.winbtns {
    display: flex;
    gap: 4px;
    padding: 0 4px 0 19px;
}
.titlebar .winbtns button {
    width: 12px;
}
.appmenu {
    position: absolute;
    left: 4px;
    top: 4px;
    width: 40px;
    height: 40px;
    border: 1px solid #222;
    background: linear-gradient(170deg, #d2d2d2, #8a8a8a 50%, #6d6d6d);
    z-index: 2;
}
.appmenu svg {
    width: 38px;
    height: 38px;
}
.appmenu span {
    position: absolute;
    right: 1px;
    bottom: 0;
    font-size: 9px;
    line-height: 10px;
    color: #111;
}

/* ribbon tabs */
.tabs {
    display: flex;
    align-items: center;
    height: 20px;
    padding-left: 45px;
    background: #3c3c3c;
}
.tab {
    height: 20px;
    padding: 0 10px 0 9px;
    color: #f2f2f2;
    text-shadow: 0 0 1px #bbb;
    white-space: nowrap;
}
.tab.active {
    height: 18px;
    align-self: flex-end;
    background: linear-gradient(#fff, #e6e6e6);
    color: #333;
    text-shadow: none;
    border-radius: 2px 2px 0 0;
}
.ribbon-toggle {
    display: flex;
    align-items: center;
    justify-content: center;
    width: 13px;
    height: 7px;
    margin-left: 22px;
    background: #ddd;
    border-radius: 2px;
}

/* ribbon */
.ribbon {
    display: flex;
    height: 99px;
    background: linear-gradient(#b0b0b0, #838383);
    border: solid #f4f4f4;
    border-width: 0 0 1px 1px;
}
.panel {
    flex: none;
    display: flex;
    flex-direction: column;
    border-right: 1px solid #a4a4a4;
}
.panel-body {
    display: flex;
    height: 78px;
    padding: 4px 3px 0;
    background: linear-gradient(#e2e2e2, #f2f2f2 50%, #fdfdfd);
}
.panel h2 {
    display: flex;
    align-items: center;
    justify-content: center;
    gap: 6px;
    height: 20px;
    padding-bottom: 2px;
    background: linear-gradient(#dadada, #f4f4f4);
    border-top: 1px solid #c6c6c6;
    white-space: nowrap;
}
.palettes { width: 91px; }
.ground { width: 129px; }
.design { width: 301px; }
.views { width: 120px; }
.draw { width: 99px; }
.modify { width: 175px; }
.layers { width: 206px; }
.clipboard { width: 76px; }
.view { width: 36px; border-right: 0; }

.item {
    display: flex;
    align-items: center;
    gap: 5px;
    height: 24px;
    padding-left: 3px;
    white-space: nowrap;
}
.design .panel-body {
    display: grid;
    grid-template-columns: 101px 90px 1fr;
}
.views .item {
    padding-left: 6px;
}
.big {
    flex: 1;
    display: flex;
    flex-direction: column;
    align-items: center;
    line-height: 14px;
    padding-top: 3px;
    height: 72px;
}
.big svg {
    margin-bottom: 3px;
}
.tools {
    display: grid;
    grid-auto-rows: 22px;
    row-gap: 2px;
    padding-top: 1px;
    justify-items: start;
}
.tools.three {
    grid-template-columns: repeat(3, 23px);
    margin-right: 5px;
}
.tool {
    display: flex;
    align-items: center;
    justify-content: center;
    width: 22px;
    height: 22px;
    background: linear-gradient(#f0f0f0, #fcfcfc);
    border: 1px solid #cfcfcf;
}
.tools.three .tool {
    width: 24px;
}
.tool.split {
    width: 33px;
    gap: 5px;
}
.tool.on {
    background: #aed3f2;
    border-color: #3b7fb5;
}
.draw .panel-body {
    gap: 2px;
}
.palettes .panel-body {
    padding-right: 2px;
}
.modify .panel-body,
.view .panel-body {
    padding-right: 1px;
}
.view .panel-body {
    padding-left: 2px;
}
.layers .panel-body {
    flex-direction: column;
    gap: 2px;
}
.layer-tools {
    display: flex;
    justify-content: space-between;
}
.layer-tools div {
    display: flex;
}
.combo {
    display: flex;
    align-items: center;
    gap: 3px;
    height: 22px;
    padding: 0 3px 0 2px;
    background: #f6f6f6;
    border: 1px solid #cfcfcf;
}
.combo select {
    flex: 1;
    min-width: 0;
    appearance: none;
}
.swatch {
    width: 14px;
    height: 14px;
    margin: 0 2px;
    background: #000;
}

/* drawing area */
.canvas {
    position: relative;
    flex: 1;
    min-height: 420px;
    margin: 6px 0 4px;
    overflow: hidden;
    background: #fdfdfd;
    border: solid #333;
    border-width: 1px 0 0 1px;
}
.drawing {
    position: absolute;
    left: 0;
    top: 0;
    width: 1000px;
    height: 400px;
}
.docbtns {
    position: absolute;
    top: 8px;
    right: 10px;
    display: flex;
    gap: 8px;
}

/* tool palette */
.palette {
    position: absolute;
    top: 64px;
    right: 35px;
    display: flex;
    color: #000;
}
.palette-frame {
    display: flex;
    width: 200px;
    height: 329px;
    padding: 2px 2px 2px 0;
    background: #c8c8c8;
    border: 1px solid #444;
    border-radius: 3px;
}
.palette-bar {
    display: flex;
    flex-direction: column;
    align-items: center;
    gap: 7px;
    width: 19px;
    padding-top: 3px;
}
.palette-bar button {
    display: flex;
}
.palette-bar h3 {
    flex: 1;
    padding-top: 3px;
    writing-mode: vertical-rl;
    transform: rotate(180deg);
    font-weight: bold;
    white-space: nowrap;
}
.palette-page {
    flex: 1;
    padding: 12px 20px;
    background: #eee;
    border: 1px solid #555;
    border-radius: 4px;
}
.palette-tool {
    display: flex;
    align-items: center;
    gap: 6px;
}
.palette-tabs {
    display: flex;
    flex-direction: column;
    margin: 3px 0 0 -4px;
}
.palette-tabs button {
    height: 61px;
    width: 18px;
    writing-mode: vertical-rl;
    transform: rotate(180deg);
    background: #c8c8c8;
    border: 1px solid #444;
    border-bottom-width: 0;
    border-radius: 4px 0 0 4px;
}
.palette-tabs button:first-child {
    border-bottom-width: 1px;
}
.palette-tabs button.active {
    background: #eee;
    border-color: #444 #eee #eee #444;
}

/* command line */
.command {
    display: flex;
    height: 60px;
    background: #a0a0a0;
    font-family: "Liberation Mono", monospace;
    font-size: 13px;
    color: #000;
}
.grip {
    width: 15px;
    padding: 4px 2px 0 1px;
}
.grip::before {
    content: "";
    display: block;
    height: 5px;
    background: repeating-linear-gradient(90deg, #222 0 1px, transparent 1px 2px);
}
.command-body {
    flex: 1;
    display: flex;
    flex-direction: column;
    background: #fdfdfd;
}
.history {
    display: flex;
    flex: 1;
    border-bottom: 1px solid #777;
}
.log {
    flex: 1;
    padding: 2px 0 0 2px;
}
.log p {
    font-size: 13px;
    line-height: 16px;
}
.vscroll {
    display: flex;
    flex-direction: column;
    justify-content: space-between;
    width: 16px;
    background: #e4e2dd;
}
.sb {
    display: flex;
    align-items: center;
    justify-content: center;
    width: 16px;
    height: 16px;
    color: #000;
    background: #d4d0c8;
    border: 1px solid;
    border-color: #fff #666 #666 #fff;
}
.prompt {
    display: flex;
    align-items: center;
    height: 18px;
    padding-left: 2px;
}
.prompt label {
    padding-top: 2px;
}
.prompt input {
    flex: 1;
    padding-left: 8px;
    outline: 0;
}
.hscroll {
    display: flex;
    width: 62px;
    height: 18px;
    background: #e4e2dd;
}
.prompt .sb {
    height: 18px;
}
.sb.end {
    margin-left: auto;
}

/* status bar */
.status {
    display: flex;
    align-items: flex-start;
    height: 24px;
    line-height: 22px;
    background: linear-gradient(#8f8f8f, #6f6f6f);
    border-top: 1px solid #000;
    font-family: "Liberation Sans", sans-serif;
    color: #000;
}
.coords {
    width: 240px;
    padding-left: 12px;
    white-space: nowrap;
}
.group {
    display: flex;
    align-items: center;
    margin-right: 12px;
    border-left: 1px solid #666;
}
.push {
    margin-left: auto;
}
.group button {
    display: flex;
    align-items: center;
    justify-content: center;
    gap: 2px;
    width: 22px;
    height: 22px;
    background: linear-gradient(#b4b4b4, #989898);
    border-right: 1px solid #666;
    white-space: nowrap;
}
.group button.on {
    background: linear-gradient(#d9eef5, #8cc4d6);
}
.group .text { width: 43px; }
.group .scale { width: 72px; }
.group .workspace { width: 70px; margin-right: 3px; }
.group .narrow { width: 11px; }
.tail {
    margin: 0 0 0 -7px;
}
.tray {
    display: flex;
    align-items: center;
    justify-content: center;
    gap: 4px;
    width: 51px;
    height: 21px;
    margin-left: 4px;
    background: #7c7c7c;
    border: 1px solid #444;
}
.sizegrip {
    width: 12px;
    height: 12px;
    margin: 6px 0 0 3px;
    background: repeating-linear-gradient(135deg, transparent 0 2px, #ccc 2px 4px);
    clip-path: polygon(100% 0, 100% 100%, 0 100%);
}
```
